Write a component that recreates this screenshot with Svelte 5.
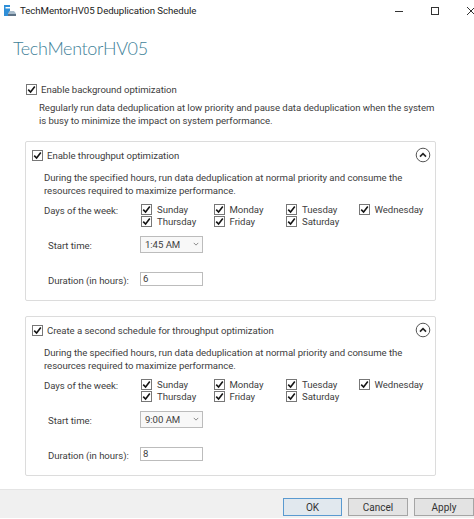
<script>
  const days = ["Sunday", "Monday", "Tuesday", "Wednesday", "Thursday", "Friday", "Saturday"];
  const schedules = [
    { title: "Enable throughput optimization", start: "1:45 AM", hours: "6" },
    { title: "Create a second schedule for throughput optimization", start: "9:00 AM", hours: "8" }
  ];
</script>

{#snippet check()}
  <svg class="check" viewBox="0 0 11 11" width="11" height="11" aria-hidden="true">
    <rect x="0.5" y="0.5" width="10" height="10" fill="#fff" stroke="#777" />
    <path d="M2.2 5.6 L4.6 8 L8.8 2.6" fill="none" stroke="#151515" stroke-width="1.6" />
  </svg>
{/snippet}

<div class="window">
  <header class="titlebar">
    <svg class="appicon" viewBox="0 0 12 12" width="12" height="12" aria-hidden="true">
      <path d="M0 0 H6 V2 H1.5 V3.5 H6 V11 H0 Z" fill="#2f8fd8" />
      <path d="M5.5 6 H10 L12 8.5 V11 H4 V8.5 Z" fill="#a9bccb" />
      <path d="M4 9 H12 V11 H4 Z" fill="#5d7286" />
    </svg>
    <span class="wintitle">TechMentorHV05 Deduplication Schedule</span>
    <div class="controls">
      <svg viewBox="0 0 10 10" width="10" height="10" aria-hidden="true"><path d="M1 5.5 H9" stroke="#333" fill="none" /></svg>
      <svg viewBox="0 0 10 10" width="10" height="10" aria-hidden="true"><rect x="1.5" y="1.5" width="7" height="7" stroke="#333" fill="none" /></svg>
      <svg viewBox="0 0 10 10" width="10" height="10" aria-hidden="true"><path d="M1 1 L9 9 M9 1 L1 9" stroke="#333" fill="none" /></svg>
    </div>
  </header>

  <main class="body">
    <h1>TechMentorHV05</h1>

    <label class="option top">
      {@render check()}
      <span>Enable background optimization</span>
    </label>
    <p class="intro">
      Regularly run data deduplication at low priority and pause data deduplication when the system<br />
      is busy to minimize the impact on system performance.
    </p>

    {#each schedules as s}
      <section class="panel">
        <div class="panelhead">
          <label class="option">
            {@render check()}
            <span>{s.title}</span>
          </label>
          <svg class="collapse" viewBox="0 0 16 16" width="16" height="16" aria-hidden="true">
            <circle cx="8" cy="8" r="6.8" fill="#fff" stroke="#555" />
            <path d="M5 9.6 L8 6.6 L11 9.6" fill="none" stroke="#222" stroke-width="1.6" />
          </svg>
        </div>
        <p class="desc">
          During the specified hours, run data deduplication at normal priority and consume the<br />
          resources required to maximize performance.
        </p>
        <div class="daysrow">
          <span class="dayslabel">Days of the week:</span>
          <div class="days">
            {#each days as d}
              <label class="day">
                {@render check()}
                <span>{d}</span>
              </label>
            {/each}
          </div>
        </div>
        <div class="field start">
          <span>Start time:</span>
          <div class="select">
            <span>{s.start}</span>
            <svg viewBox="0 0 8 5" width="6" height="4" aria-hidden="true"><path d="M1 1 L4 4 L7 1" fill="none" stroke="#666" /></svg>
          </div>
        </div>
        <div class="field duration">
          <span>Duration (in hours):</span>
          <div class="input">{s.hours}</div>
        </div>
      </section>
    {/each}
  </main>

  <footer class="footer">
    <button class="primary">OK</button>
    <button>Cancel</button>
    <button>Apply</button>
  </footer>
</div>

<style>
  :global(body) {
    margin: 0;
    background: #fff;
    overflow: hidden;
  }
  .window {
    width: 474px;
    height: 519px;
    overflow: hidden;
    display: flex;
    flex-direction: column;
    font-family: Roboto, "Open Sans", sans-serif;
    font-size: 9.6px;
    letter-spacing: -0.05px;
    color: #404040;
  }
  .titlebar {
    height: 21px;
    display: flex;
    align-items: center;
    padding-left: 4px;
    flex: none;
  }
  .appicon {
    margin-right: 4px;
  }
  .wintitle {
    font-size: 9.7px;
    letter-spacing: -0.08px;
    color: #222;
  }
  .controls {
    margin-left: auto;
    display: flex;
    gap: 26px;
    margin-right: -2px;
  }
  .body {
    flex: 1;
    padding: 0 38px 0 25px;
    min-height: 0;
  }
  h1 {
    margin: 13px 0 21px -12px;
    font-family: Lato, Roboto, sans-serif;
    font-size: 18px;
    letter-spacing: -0.35px;
    line-height: 28px;
    font-weight: 300;
    color: #3f8299;
  }
  .option {
    display: flex;
    align-items: center;
    gap: 4px;
    line-height: 13px;
  }
  .top {
    margin-left: 1px;
  }
  .intro {
    margin: 6px 0 14px 14px;
    line-height: 12.6px;
    white-space: nowrap;
  }
  .panel {
    border: 1px solid #dcdcdc;
    border-radius: 2px;
    height: 160px;
    box-sizing: border-box;
    margin-bottom: 15px;
    padding: 7px 4px 0 6px;
  }
  .panelhead {
    display: flex;
    justify-content: space-between;
    align-items: center;
    height: 12px;
  }
  .desc {
    margin: 11px 0 6px 12px;
    line-height: 12.8px;
    white-space: nowrap;
  }
  .daysrow {
    display: flex;
    margin-left: 12px;
  }
  .dayslabel {
    width: 98px;
    padding-top: 1px;
  }
  .days {
    display: grid;
    grid-template-columns: repeat(4, 72.5px);
  }
  .day {
    display: flex;
    align-items: center;
    gap: 5px;
    height: 12px;
    line-height: 12px;
  }
  .field {
    display: flex;
    align-items: center;
    margin-left: 16px;
  }
  .field > span {
    width: 92px;
    padding-top: 3px;
  }
  .start {
    margin-top: 8px;
  }
  .duration {
    margin-top: 19px;
  }
  .select {
    width: 63px;
    height: 17px;
    box-sizing: border-box;
    border: 1px solid #bcbcbc;
    background: #f8f8f8;
    display: flex;
    align-items: center;
    justify-content: space-between;
    padding: 0 3px 0 4px;
  }
  .input {
    width: 63px;
    height: 14px;
    box-sizing: border-box;
    border: 1px solid #bcbcbc;
    padding-left: 2px;
    line-height: 12px;
  }
  .footer {
    flex: none;
    height: 29px;
    box-sizing: border-box;
    margin-bottom: 1px;
    background: #f0f0f0;
    border-top: 1px solid #e4e4e4;
    display: flex;
    justify-content: flex-end;
    gap: 6px;
    padding: 8px 0 0 0;
  }
  button {
    width: 60px;
    height: 18px;
    padding: 0;
    font: inherit;
    font-size: 10px;
    color: #333;
    background: #e3e3e3;
    border: 1px solid #a5a5a5;
  }
  button.primary {
    width: 59px;
    background: #e1e8ee;
    border-color: #5a9ad0;
  }
</style>
